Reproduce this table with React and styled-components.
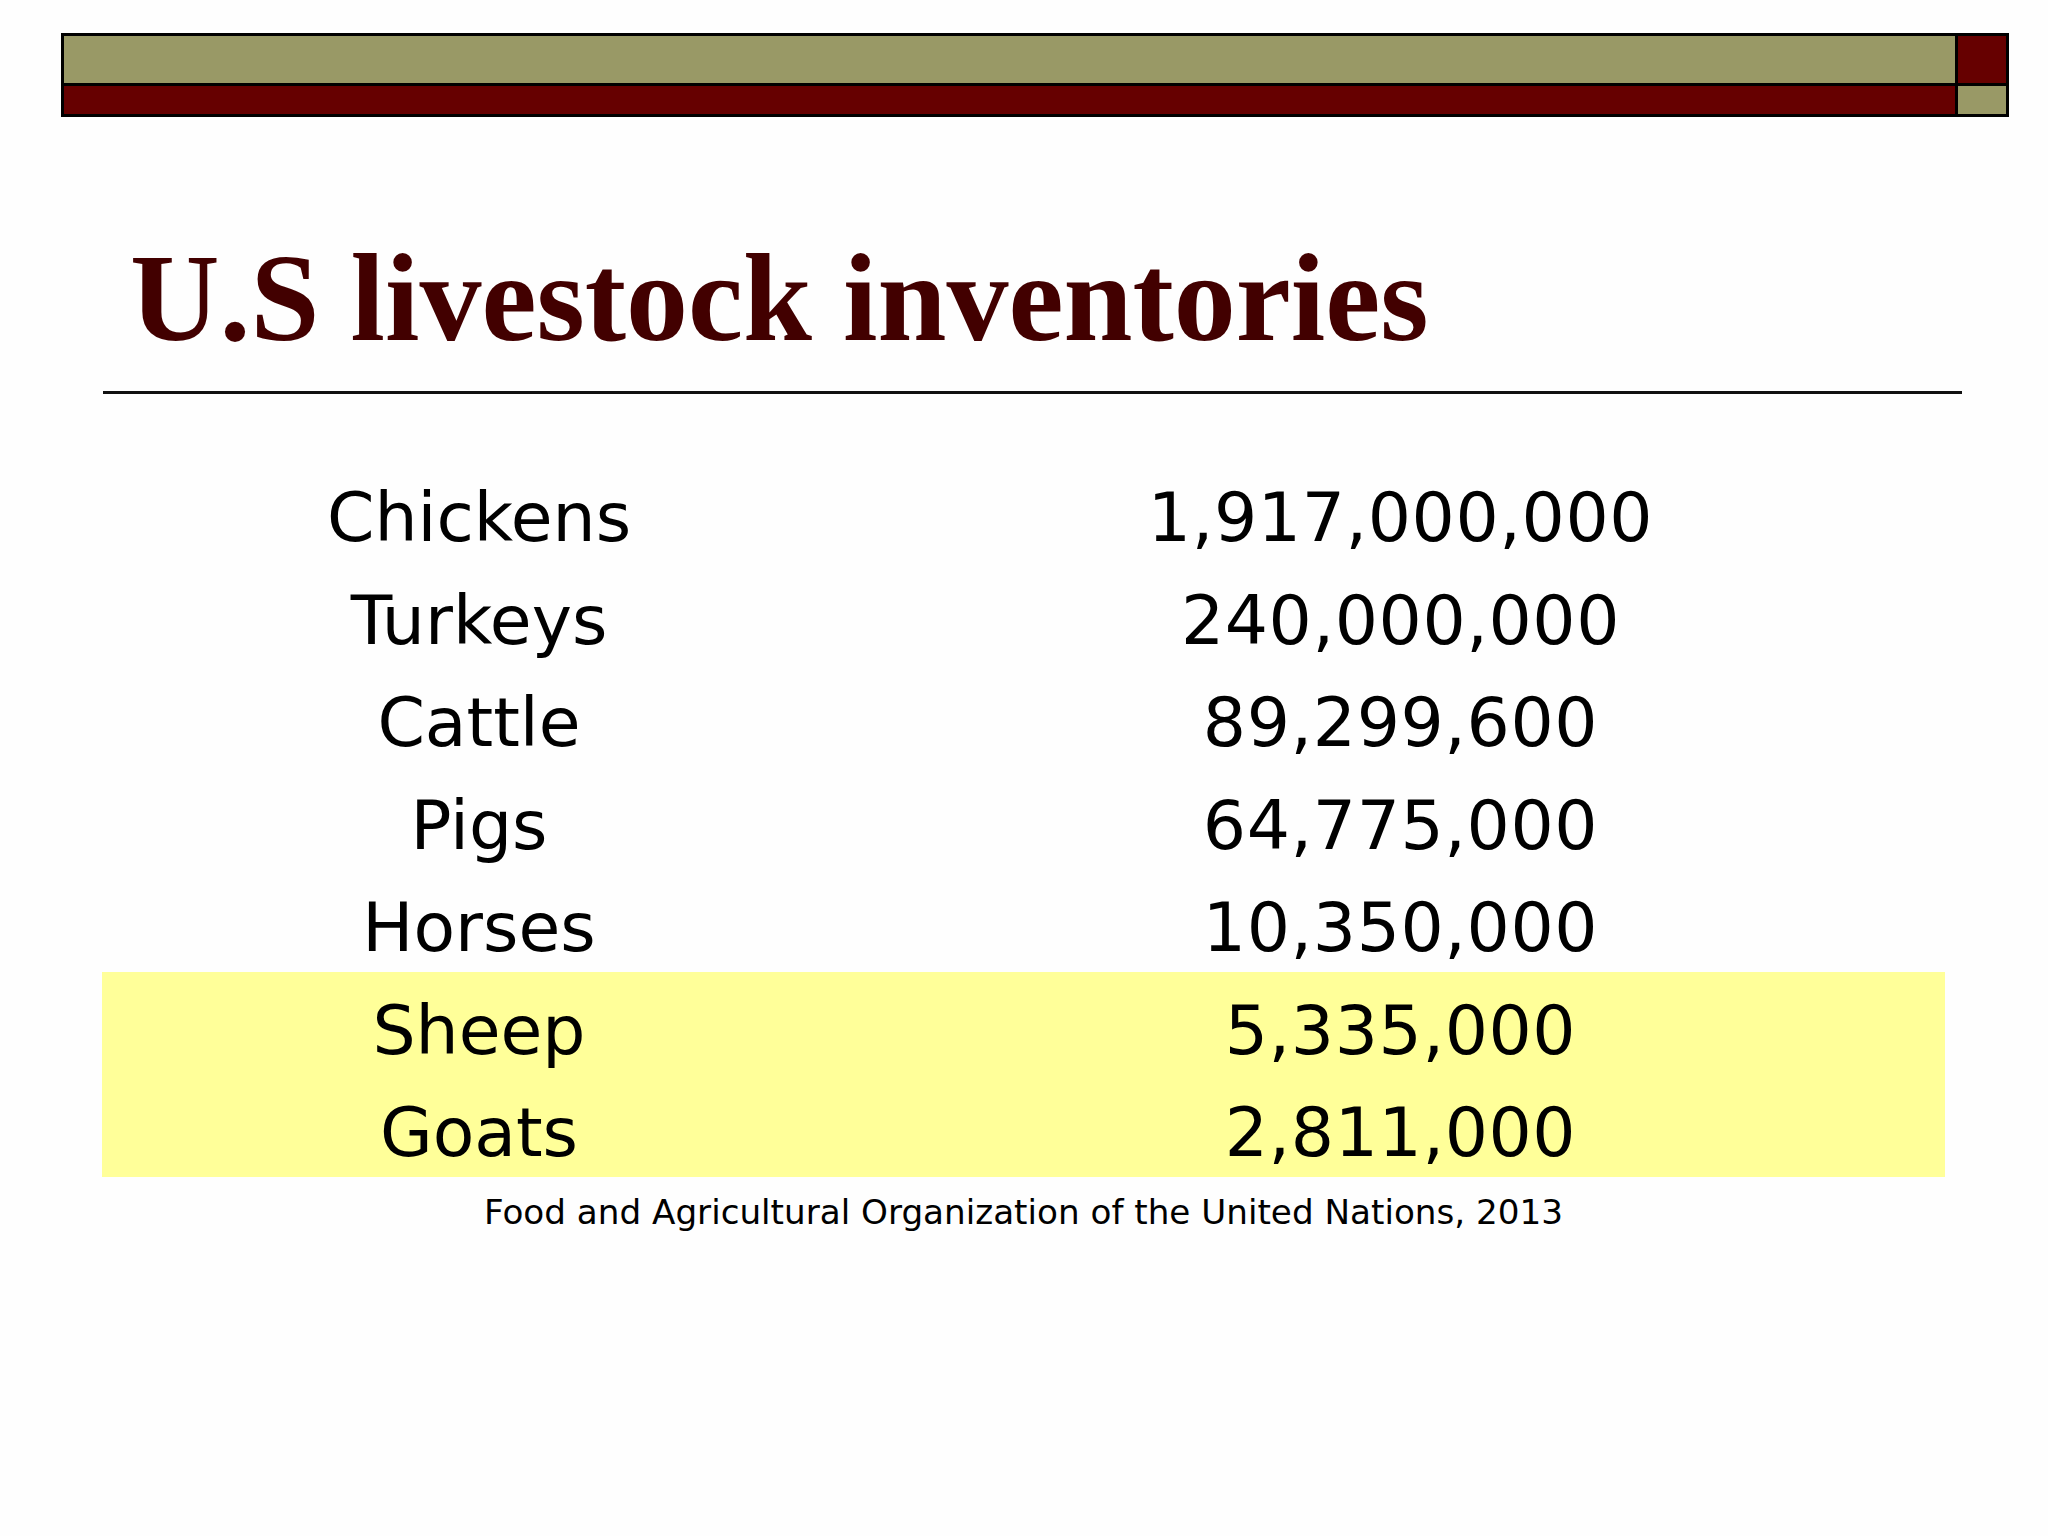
import React from "react";
import styled, { createGlobalStyle } from "styled-components";

const GlobalStyle = createGlobalStyle`
  html, body {
    margin: 0;
    padding: 0;
    background: #fefefe;
  }
  body {
    width: 2048px;
    height: 1536px;
    overflow: hidden;
  }
`;

const Slide = styled.div`
  width: 2048px;
  height: 1536px;
  background: #fefefe;
  padding-top: 33px;
  box-sizing: border-box;
`;

const Banner = styled.div`
  margin-left: 61px;
  width: 1948px;
  display: grid;
  grid-template-columns: 1891px 48px;
  grid-template-rows: 47px 28px;
  gap: 3px;
  padding: 3px;
  box-sizing: border-box;
  background: #000;
`;

const BannerCell = styled.div`
  background: ${(p) => (p.tone === "red" ? "#660000" : "#999966")};
`;

const Content = styled.main`
  margin-left: 103px;
  width: 1859px;
`;

const Title = styled.h1`
  margin: 120px 0 0 0;
  padding-left: 27px;
  font-family: "Liberation Serif", "Times New Roman", serif;
  font-weight: bold;
  font-size: 124px;
  line-height: 1;
  color: #420000;
  white-space: nowrap;
`;

const Rule = styled.hr`
  margin: 30px 0 0 0;
  border: none;
  height: 3px;
  background: #111;
`;

const Table = styled.div`
  margin-top: 65px;
  margin-left: -1px;
  width: 1843px;
  font-family: "DejaVu Sans", Verdana, sans-serif;
  color: #000;
`;

const Row = styled.div`
  display: grid;
  grid-template-columns: 754px 1089px;
  height: 102.5px;
  align-items: center;
  background: ${(p) => (p.highlight ? "#ffff99" : "transparent")};
`;

const Cell = styled.div`
  padding-top: 16px;
  text-align: center;
  font-size: 68px;
  line-height: 1;
  white-space: nowrap;
  letter-spacing: ${(p) => (p.numeric ? "0.6px" : "0")};
`;

const Source = styled.p`
  margin: 15px 0 0 0;
  text-align: center;
  font-size: 34.2px;
  line-height: 40px;
  white-space: nowrap;
`;

const data = [
  ["Chickens", "1,917,000,000"],
  ["Turkeys", "240,000,000"],
  ["Cattle", "89,299,600"],
  ["Pigs", "64,775,000"],
  ["Horses", "10,350,000"],
  ["Sheep", "5,335,000", true],
  ["Goats", "2,811,000", true],
];

export default function App() {
  return (
    <>
      <GlobalStyle />
      <Slide>
        <Banner>
          <BannerCell tone="olive" />
          <BannerCell tone="red" />
          <BannerCell tone="red" />
          <BannerCell tone="olive" />
        </Banner>
        <Content>
          <Title>U.S livestock inventories</Title>
          <Rule />
          <Table>
            {data.map(([animal, count, highlight]) => (
              <Row key={animal} highlight={highlight}>
                <Cell>{animal}</Cell>
                <Cell numeric>{count}</Cell>
              </Row>
            ))}
            <Source>
              Food and Agricultural Organization of the United Nations, 2013
            </Source>
          </Table>
        </Content>
      </Slide>
    </>
  );
}
